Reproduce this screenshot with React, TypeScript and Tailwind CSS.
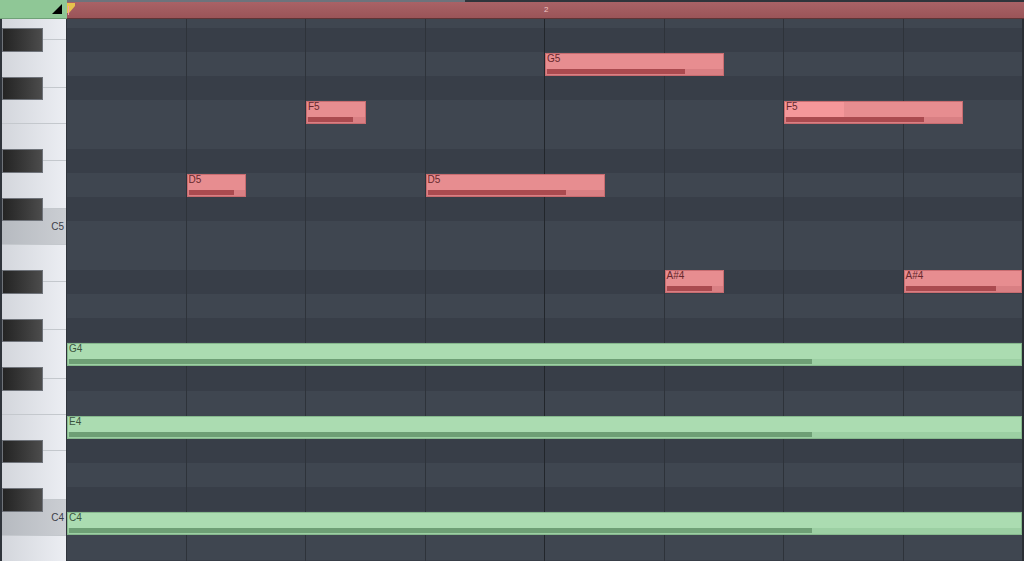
import React from "react";

const R = 24.2;
// top of a note row inside the roll area (area starts at y=19)
const rowTop = (n: number) => 492.7 - (n - 60) * R;
const BEAT = 119.5;

const isBlack = (n: number) => [1, 3, 6, 8, 10].includes(n % 12);

type Note = { n: number; label: string; beat: number; len: number; green?: boolean; glow?: boolean };

const notes: Note[] = [
  { n: 79, label: "G5", beat: 4, len: 1.5 },
  { n: 77, label: "F5", beat: 2, len: 0.5 },
  { n: 77, label: "F5", beat: 6, len: 1.5, glow: true },
  { n: 74, label: "D5", beat: 1, len: 0.5 },
  { n: 74, label: "D5", beat: 3, len: 1.5 },
  { n: 70, label: "A#4", beat: 5, len: 0.5 },
  { n: 70, label: "A#4", beat: 7, len: 1 },
  { n: 67, label: "G4", beat: 0, len: 8, green: true },
  { n: 64, label: "E4", beat: 0, len: 8, green: true },
  { n: 60, label: "C4", beat: 0, len: 8, green: true },
];

const whiteKeys = [
  { name: "B", h: 1.5 },
  { name: "A", h: 2 },
  { name: "G", h: 2 },
  { name: "F", h: 1.5 },
  { name: "E", h: 1.5 },
  { name: "D", h: 2 },
  { name: "C", h: 1.5 },
];

const rows = Array.from({ length: 24 }, (_, i) => 81 - i);
const blackRows = rows.filter(isBlack);

function Keyboard() {
  const keys: { label: string; h: number; isC: boolean }[] = [];
  for (let oct = 5; oct >= 3; oct--) {
    whiteKeys.forEach((k) => keys.push({ label: `${k.name}${oct}`, h: k.h * R, isC: k.name === "C" }));
  }
  // B5 down to A3 is all that shows
  const visible = keys.slice(0, 16);
  return (
    <div className="relative w-[67px] shrink-0 overflow-hidden bg-[#2f343b] pl-[2px] pr-px">
      <div className="flex flex-col mt-[-63.9px]">
        {visible.map((k, i) => (
          <div
            key={i}
            style={{ height: k.h }}
            className={
              "shrink-0 border-b border-[#c4c8cd] flex items-end justify-end pr-[2px] pb-[12px] " +
              (k.isC
                ? "bg-gradient-to-r from-[#b6bac0] to-[#cbced3]"
                : "bg-gradient-to-r from-[#d3d6dc] to-[#eceef3]")
            }
          >
            {k.isC && (
              <span className="text-[10px] leading-none text-[#3b4048]">{k.label}</span>
            )}
          </div>
        ))}
      </div>
      {blackRows.map((n) => (
        <div
          key={n}
          style={{ top: rowTop(n) + 0.5 }}
          className="absolute left-[2px] w-[41px] h-[23.5px] border border-[#6f737a] bg-gradient-to-r from-[#242424] to-[#4c4c4c]"
        />
      ))}
    </div>
  );
}

function NoteBlock({ note }: { note: Note }) {
  const left = note.beat * BEAT;
  const width = Math.min(note.len * BEAT, 955 - left);
  return (
    <div
      style={{ top: rowTop(note.n) + 0.7, left, width }}
      className={
        "absolute h-[23px] border " +
        (note.green ? "bg-[#abdcb1] border-[#86b88d]" : "bg-[#e78d90] border-[#c86c70]")
      }
    >
      {note.glow && <div className="absolute left-0 top-0 bottom-0 w-[59px] bg-[#ff9fa1]/60" />}
      <span
        className={
          "absolute left-px top-0 text-[10px] leading-none " +
          (note.green ? "text-[#3a553e]" : "text-[#66282c]")
        }
      >
        {note.label}
      </span>
      <div
        className={
          "absolute left-0 right-0 bottom-0 h-[6px] " +
          (note.green ? "bg-[#9ccfa3]" : "bg-[#d97f83]")
        }
      />
      <div
        className={
          "absolute left-px bottom-px h-[5px] w-[78%] " +
          (note.green ? "bg-[#6e9f75]" : "bg-[#aa4a4f]")
        }
      />
    </div>
  );
}

export default function App() {
  return (
    <div
      className="w-[1024px] h-[561px] overflow-hidden flex flex-col bg-[#3f4650]"
      style={{ fontFamily: "'Liberation Sans', Arial, sans-serif" }}
    >
      {/* header */}
      <div className="flex h-[19px] shrink-0">
        <div className="relative w-[67px] shrink-0 bg-[#8fc796] border-b border-[#6fa177]">
          <svg className="absolute left-[52px] top-[4px]" width="10" height="10" viewBox="0 0 10 10">
            <polygon points="10,0 10,10 0,10" fill="#000" />
          </svg>
        </div>
        <div className="flex-1 flex flex-col bg-[#2f343b]">
          <div className="h-[2px] w-[398px] bg-[#6d737c]" />
          <div className="relative flex-1 bg-gradient-to-b from-[#a96266] to-[#9a5458] border-b border-[#5e3436]">
            <svg className="absolute left-0 top-px" width="8" height="12" viewBox="0 0 8 12">
              <polygon points="0,0 8,0 8,3 2,10 0,10" fill="#e6c24c" />
              <rect x="1" y="3" width="1" height="9" fill="#f2a0a8" />
            </svg>
            <span className="absolute left-[477px] top-[4px] text-[8px] leading-none text-[#efc6c6]">2</span>
          </div>
        </div>
      </div>

      {/* roll */}
      <div className="flex flex-1 min-h-0">
        <Keyboard />
        <div className="relative w-[955px] shrink-0 overflow-hidden">
          <div className="flex flex-col mt-[-15.5px]">
            {rows.map((n) => (
              <div
                key={n}
                className={"h-[24.2px] shrink-0 " + (isBlack(n) ? "bg-[#383e48]" : "bg-[#3f4650]")}
              />
            ))}
          </div>
          <div className="absolute inset-0 flex">
            {Array.from({ length: 8 }, (_, i) => (
              <div
                key={i}
                className={
                  "w-[119.5px] shrink-0 border-r " +
                  (i === 3 ? "border-[#22262b]" : "border-[#2e333a]")
                }
              />
            ))}
          </div>
          {notes.map((note, i) => (
            <NoteBlock key={i} note={note} />
          ))}
        </div>
        <div className="flex-1 bg-[#2a2e34]" />
      </div>
    </div>
  );
}
